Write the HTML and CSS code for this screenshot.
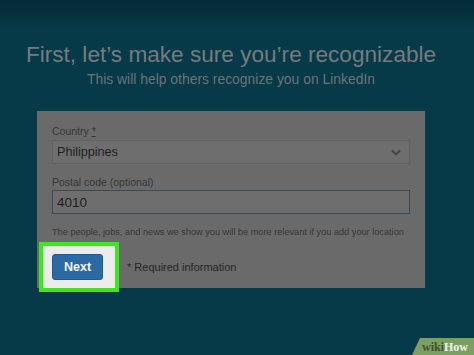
FILE: index.html
```html
<!DOCTYPE html>
<html lang="en">
<head>
  <meta charset="UTF-8" />
  <meta name="viewport" content="width=device-width, initial-scale=1.0" />
  <title>Sign up - LinkedIn</title>
  <link rel="stylesheet" href="styles.css">
</head>
<body>

  <div class="page">
    <!-- Heading -->
    <header class="intro">
      <h1>First, let’s make sure you’re recognizable</h1>
      <p class="subtitle">This will help others recognize you on LinkedIn</p>
    </header>

    <!-- Location form -->
    <form class="panel">
      <label class="field-label">Country <span class="req">*</span></label>
      <div class="select-box">
        <span>Philippines</span>
        <svg class="chevron" width="10" height="7" viewBox="0 0 10 7">
          <path d="M1 1.5 L5 5.5 L9 1.5" fill="none" stroke="#454545" stroke-width="1.8"/>
        </svg>
      </div>

      <label class="field-label">Postal code (optional)</label>
      <div class="text-box">4010</div>

      <p class="hint">The people, jobs, and news we show you will be more relevant if you add your location</p>

      <div class="actions">
        <div class="highlight">
          <button type="button" class="btn-next">Next</button>
        </div>
        <span class="required-note">* Required information</span>
      </div>
    </form>
  </div>

  <div class="badge"><span class="wiki">wiki</span>How</div>

</body>
</html>
```

FILE: styles.css
```css
/* General Styles */
body {
  margin: 0;
  padding: 0;
  height: 355px;
  overflow: hidden;
  font-family: "Liberation Sans", Arial, sans-serif;
  background: linear-gradient(to bottom, #032c37 0px, #04313d 16px, #063a48 26px, #063a48 100%);
  position: relative;
}

.page {
  width: 462px;
  padding-top: 42px;
}

/* Heading */
.intro {
  display: flex;
  flex-direction: column;
  align-items: center;
}

h1 {
  margin: 0;
  font-size: 22.6px;
  line-height: 26px;
  font-weight: normal;
  color: #767b7f;
  white-space: nowrap;
}

.subtitle {
  margin: 3px 0 0;
  font-size: 13.9px;
  line-height: 16px;
  color: #6d7377;
  white-space: nowrap;
}

/* Panel */
.panel {
  width: 358px;
  margin: 24px auto 0;
  padding: 14px 15px 0;
  background: #6a6a6a;
  display: flex;
  flex-direction: column;
}

.field-label {
  font-size: 10.5px;
  line-height: 12px;
  color: #363636;
}

.req {
  text-decoration: underline;
}

.select-box {
  margin-top: 3px;
  height: 22px;
  padding: 0 8px 0 4px;
  border: 1px solid #626262;
  background: #6e6e6e;
  display: flex;
  align-items: center;
  justify-content: space-between;
  font-size: 12.6px;
  color: #1e1e1e;
  margin-bottom: 12px;
}

.text-box {
  margin-top: 2px;
  height: 22px;
  padding: 0 4px;
  border: 1px solid #3b4a54;
  background: #6e6e6e;
  display: flex;
  align-items: center;
  font-size: 13.5px;
  color: #1e1e1e;
}

.hint {
  margin: 12px 0 0;
  font-size: 9.2px;
  line-height: 12px;
  color: #363636;
  white-space: nowrap;
}

/* Actions */
.actions {
  display: flex;
  align-items: center;
  margin-top: 4px;
  margin-bottom: -4px;
}

.highlight {
  margin-left: -13px;
  width: 63px;
  height: 42px;
  border: 4px solid #3be81b;
  background: #ececec;
  display: flex;
  align-items: center;
  padding-left: 9px;
  box-sizing: content-box;
}

.btn-next {
  width: 51px;
  height: 26px;
  border: 1px solid #215a90;
  border-radius: 3px;
  background: #2c6aa6;
  color: #f4f4f4;
  font-family: "Liberation Sans", Arial, sans-serif;
  font-weight: bold;
  font-size: 12.5px;
  padding: 0;
}

.required-note {
  margin-left: 8px;
  margin-top: -1px;
  font-size: 11px;
  color: #262626;
  align-self: center;
}

/* wikiHow badge */
.badge {
  position: absolute;
  right: 0;
  bottom: 0;
  width: 52px;
  height: 17px;
  padding-left: 10px;
  background: #7d9f63;
  clip-path: polygon(8px 0, 100% 0, 100% 100%, 0 100%);
  font-family: "Liberation Serif", "Times New Roman", serif;
  font-weight: bold;
  font-size: 12px;
  line-height: 18px;
  color: #eef3e8;
}

.wiki {
  color: #3f5230;
  font-weight: bold;
}
```
